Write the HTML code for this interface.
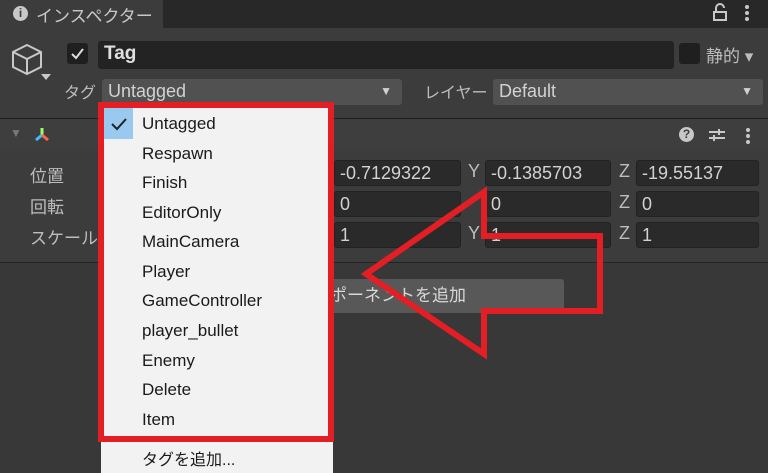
<!DOCTYPE html>
<html><head><meta charset="utf-8"><style>
*{margin:0;padding:0;box-sizing:border-box}
body{width:768px;height:473px;overflow:hidden;background:#383838;font-family:"Liberation Sans","Noto Sans CJK JP",sans-serif;position:relative;color:#c4c4c4}
.a{position:absolute}
.f{position:absolute;background:#2a2a2a;border:1px solid #222;border-radius:3px;color:#d2d2d2;font-size:18px;padding-left:5px;line-height:24px;height:26px}
.l{position:absolute;font-size:18px;color:#bdbdbd}
.it{position:absolute;left:142px;font-size:17px;color:#1a1a1a}
</style></head><body>
<div class="a" style="left:0;top:0;width:768px;height:28px;background:#282828"></div>
<div class="a" style="left:0;top:0;width:163px;height:28px;background:#3c3c3c"></div>
<div class="a" style="left:13px;top:6px;width:15px;height:15px;border-radius:50%;background:#c8c8c8;color:#3c3c3c;font-size:12px;font-weight:bold;text-align:center;line-height:15px">i</div>
<div class="l" style="left:36px;top:2px;font-size:17px;color:#c8c8c8">インスペクター</div>
<svg class="a" style="left:712px;top:3px" width="16" height="18"><path d="M4 8V5a4 4 0 0 1 8 0" fill="none" stroke="#c8c8c8" stroke-width="2"/><rect x="2" y="9" width="12" height="8" fill="none" stroke="#c8c8c8" stroke-width="2"/></svg>
<div class="a" style="left:745px;top:5px;width:4px;height:4px;background:#c8c8c8;border-radius:2px;box-shadow:0 6px 0 #c8c8c8,0 12px 0 #c8c8c8"></div>
<div class="a" style="left:0;top:28px;width:768px;height:90px;background:#3c3c3c"></div>
<svg class="a" style="left:10px;top:42px" width="46" height="46" viewBox="0 0 46 46"><path d="M17 3 L31 10 L31 25 L17 32 L3 25 L3 10 Z M3 10 L17 17 L31 10 M17 17 L17 32" fill="none" stroke="#c8c8c8" stroke-width="2"/><path d="M31 32 L41 32 L36 38Z" fill="#c8c8c8"/></svg>
<div class="a" style="left:67px;top:43px;width:21px;height:21px;background:#1f1f1f;border-radius:3px"><svg width="21" height="21"><path d="M5 11 L9 15 L16 6" fill="none" stroke="#ddd" stroke-width="2"/></svg></div>
<div class="f" style="left:98px;top:41px;width:576px;height:28px;background:#232323;font-weight:bold;font-size:19px;color:#e0e0e0">Tag</div>
<div class="a" style="left:679px;top:43px;width:21px;height:21px;background:#1f1f1f;border-radius:3px"></div>
<div class="l" style="left:706px;top:42px;font-size:17px">静的 ▾</div>
<div class="l" style="left:64px;top:79px;font-size:16px">タグ</div>
<div class="a" style="left:102px;top:79px;width:300px;height:26px;background:#515151;border-radius:3px;color:#d2d2d2;font-size:18px;padding-left:6px;line-height:25px">Untagged<span style="position:absolute;right:10px;font-size:12px">▼</span></div>
<div class="l" style="left:424px;top:79px;font-size:16px">レイヤー</div>
<div class="a" style="left:493px;top:79px;width:270px;height:26px;background:#515151;border-radius:3px;color:#d2d2d2;font-size:18px;padding-left:6px;line-height:25px">Default<span style="position:absolute;right:10px;font-size:12px">▼</span></div>
<div class="a" style="left:0;top:118px;width:768px;height:1px;background:#1e1e1e"></div>
<div class="a" style="left:0;top:119px;width:768px;height:32px;background:#3e3e3e"></div>
<div class="l" style="left:10px;top:126px;font-size:12px;color:#777">▼</div>
<div class="a" style="left:33px;top:126px;width:18px;height:18px"><svg width="18" height="18"><path d="M9 2V9" stroke="#9f6" stroke-width="3"/><path d="M9 9L3 14" stroke="#4bf" stroke-width="3"/><path d="M9 9L15 14" stroke="#f64" stroke-width="3"/></svg></div>
<div class="a" style="left:679px;top:127px;width:15px;height:15px;border-radius:50%;background:#c8c8c8;color:#3e3e3e;font-size:12px;font-weight:bold;text-align:center;line-height:15px">?</div>
<svg class="a" style="left:708px;top:127px" width="18" height="16"><path d="M1 5H17M1 11H17" stroke="#c8c8c8" stroke-width="2"/><path d="M11 2V8M6 8V14" stroke="#c8c8c8" stroke-width="2"/></svg>
<div class="a" style="left:746px;top:128px;width:4px;height:4px;background:#c8c8c8;border-radius:2px;box-shadow:0 6px 0 #c8c8c8,0 12px 0 #c8c8c8"></div>
<div class="a" style="left:0;top:151px;width:768px;height:111px;background:#3c3c3c"></div>
<div class="l" style="left:30px;top:162px;font-size:17px">位置</div>
<div class="l" style="left:30px;top:193px;font-size:17px">回転</div>
<div class="l" style="left:30px;top:224px;font-size:17px">スケール</div>
<div class="f" style="left:334px;top:160px;width:127px">-0.7129322</div>
<div class="l" style="left:468px;top:161px">Y</div><div class="f" style="left:485px;top:160px;width:126px">-0.1385703</div>
<div class="l" style="left:619px;top:161px">Z</div><div class="f" style="left:636px;top:160px;width:123px">-19.55137</div>
<div class="f" style="left:334px;top:191px;width:127px">0</div>
<div class="f" style="left:485px;top:191px;width:126px">0</div>
<div class="l" style="left:619px;top:192px">Z</div><div class="f" style="left:636px;top:191px;width:123px">0</div>
<div class="f" style="left:334px;top:222px;width:127px">1</div>
<div class="l" style="left:468px;top:223px">Y</div><div class="f" style="left:485px;top:222px;width:126px">1</div>
<div class="l" style="left:619px;top:223px">Z</div><div class="f" style="left:636px;top:222px;width:123px">1</div>
<div class="a" style="left:0;top:262px;width:768px;height:1px;background:#242424"></div>
<div class="a" style="left:310px;top:279px;width:254px;height:34px;background:#585858;border-radius:3px;color:#d8d8d8;font-size:17px;line-height:33px;padding-left:20px">ポーネントを追加</div>
<div class="a" style="left:101px;top:102px;width:232px;height:371px;background:#f2f2f2"></div>
<div class="a" style="left:104px;top:108px;width:29px;height:31px;background:#99c9ef"><svg width="29" height="31"><path d="M8 16 L13 21 L22 11" fill="none" stroke="#222" stroke-width="2"/></svg></div>
<div class="it" style="top:114px">Untagged</div>
<div class="it" style="top:144px">Respawn</div>
<div class="it" style="top:173px">Finish</div>
<div class="it" style="top:203px">EditorOnly</div>
<div class="it" style="top:232px">MainCamera</div>
<div class="it" style="top:262px">Player</div>
<div class="it" style="top:291px">GameController</div>
<div class="it" style="top:321px">player_bullet</div>
<div class="it" style="top:351px">Enemy</div>
<div class="it" style="top:380px">Delete</div>
<div class="it" style="top:410px">Item</div>
<div class="it" style="top:446px;font-size:16px">タグを追加...</div>
<div class="a" style="left:98px;top:102px;width:236px;height:340px;border:6px solid #e31e25"></div>
<svg class="a" style="left:0;top:0" width="768" height="473"><path d="M366 274 L484 192 L484 236 L600 236 L600 311 L484 311 L484 354 Z" fill="none" stroke="#e31e25" stroke-width="6" stroke-linejoin="miter"/></svg>
</body></html>
